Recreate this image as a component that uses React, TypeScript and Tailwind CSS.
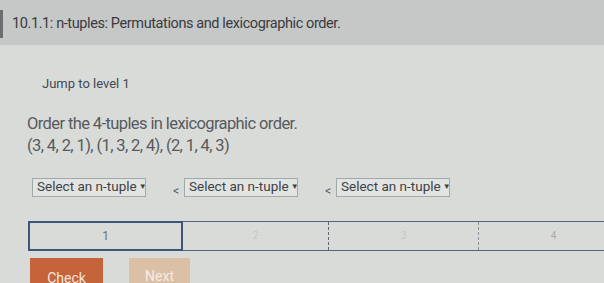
import React from 'react';

function TupleSelect() {
  return (
    <div className="flex h-[19px] w-[114px] shrink-0 items-center overflow-hidden whitespace-nowrap border border-[#a3a8aa] bg-[#e2e4e2] pl-[4px] text-[13.5px] leading-none text-[#3e4245]">
      <span>Select an n-tuple</span>
      <span className="ml-[2px] text-[8px]">▼</span>
    </div>
  );
}

function Lt() {
  return <span className="ml-[27px] mr-[5px] mt-[7px] w-[6px] text-[12px] text-[#55595c]">&lt;</span>;
}

export default function App() {
  return (
    <div className="h-[283px] w-[604px] overflow-hidden bg-[#d9dbd8] font-['Roboto',sans-serif]">
      <div className="flex h-[45px] items-center bg-[#c6c8c7] pt-[2px]">
        <div className="h-[28px] w-[3px] bg-[#6b6e70]" />
        <h1 className="ml-[9px] text-[14.5px] tracking-[-0.4px] text-[#383b3d]">
          10.1.1: n-tuples: Permutations and lexicographic order.
        </h1>
      </div>

      <p className="ml-[42px] mt-[29px] text-[13px] text-[#3d4a55]">Jump to level 1</p>

      <div className="ml-[27px] mt-[19px] text-[16.5px] leading-[22px] tracking-[-0.6px] text-[#565a5c]">
        <p>Order the 4-tuples in lexicographic order.</p>
        <p>(3, 4, 2, 1), (1, 3, 2, 4), (2, 1, 4, 3)</p>
      </div>

      <div className="ml-[32px] mt-[18px] flex items-center">
        <TupleSelect />
        <Lt />
        <TupleSelect />
        <Lt />
        <TupleSelect />
      </div>

      <div className="ml-[28px] mt-[21px] flex h-[30px] w-[600px] items-stretch">
        <div className="flex w-[155px] items-center justify-center border-2 border-[#3c5678] text-[12px] text-[#6d7276]">1</div>
        <div className="flex w-[145px] items-center justify-center border-y border-[#4f6580] text-[10px] text-[#c4c6c5]">2</div>
        <div className="flex w-[150px] items-stretch border-y border-[#4f6580]">
          <div className="border-l border-dashed border-[#5e6670]" />
          <div className="flex flex-1 items-center justify-center text-[10px] text-[#c4c6c5]">3</div>
        </div>
        <div className="flex w-[150px] items-stretch border-y border-[#4f6580]">
          <div className="border-l border-dashed border-[#8a9096]" />
          <div className="flex flex-1 items-center justify-center text-[10px] text-[#a9acac]">4</div>
        </div>
      </div>

      <div className="ml-[30px] mt-[7px] flex gap-[26px]">
        <button className="h-[30px] w-[73px] bg-[#c5643a] pt-[10px] text-[14px] leading-[20px] text-[#f2e6df]">Check</button>
        <button className="h-[30px] w-[61px] bg-[#dcc0a6] pt-[6px] text-[14px] leading-[20px] text-[#f4ece4]">Next</button>
      </div>
    </div>
  );
}
